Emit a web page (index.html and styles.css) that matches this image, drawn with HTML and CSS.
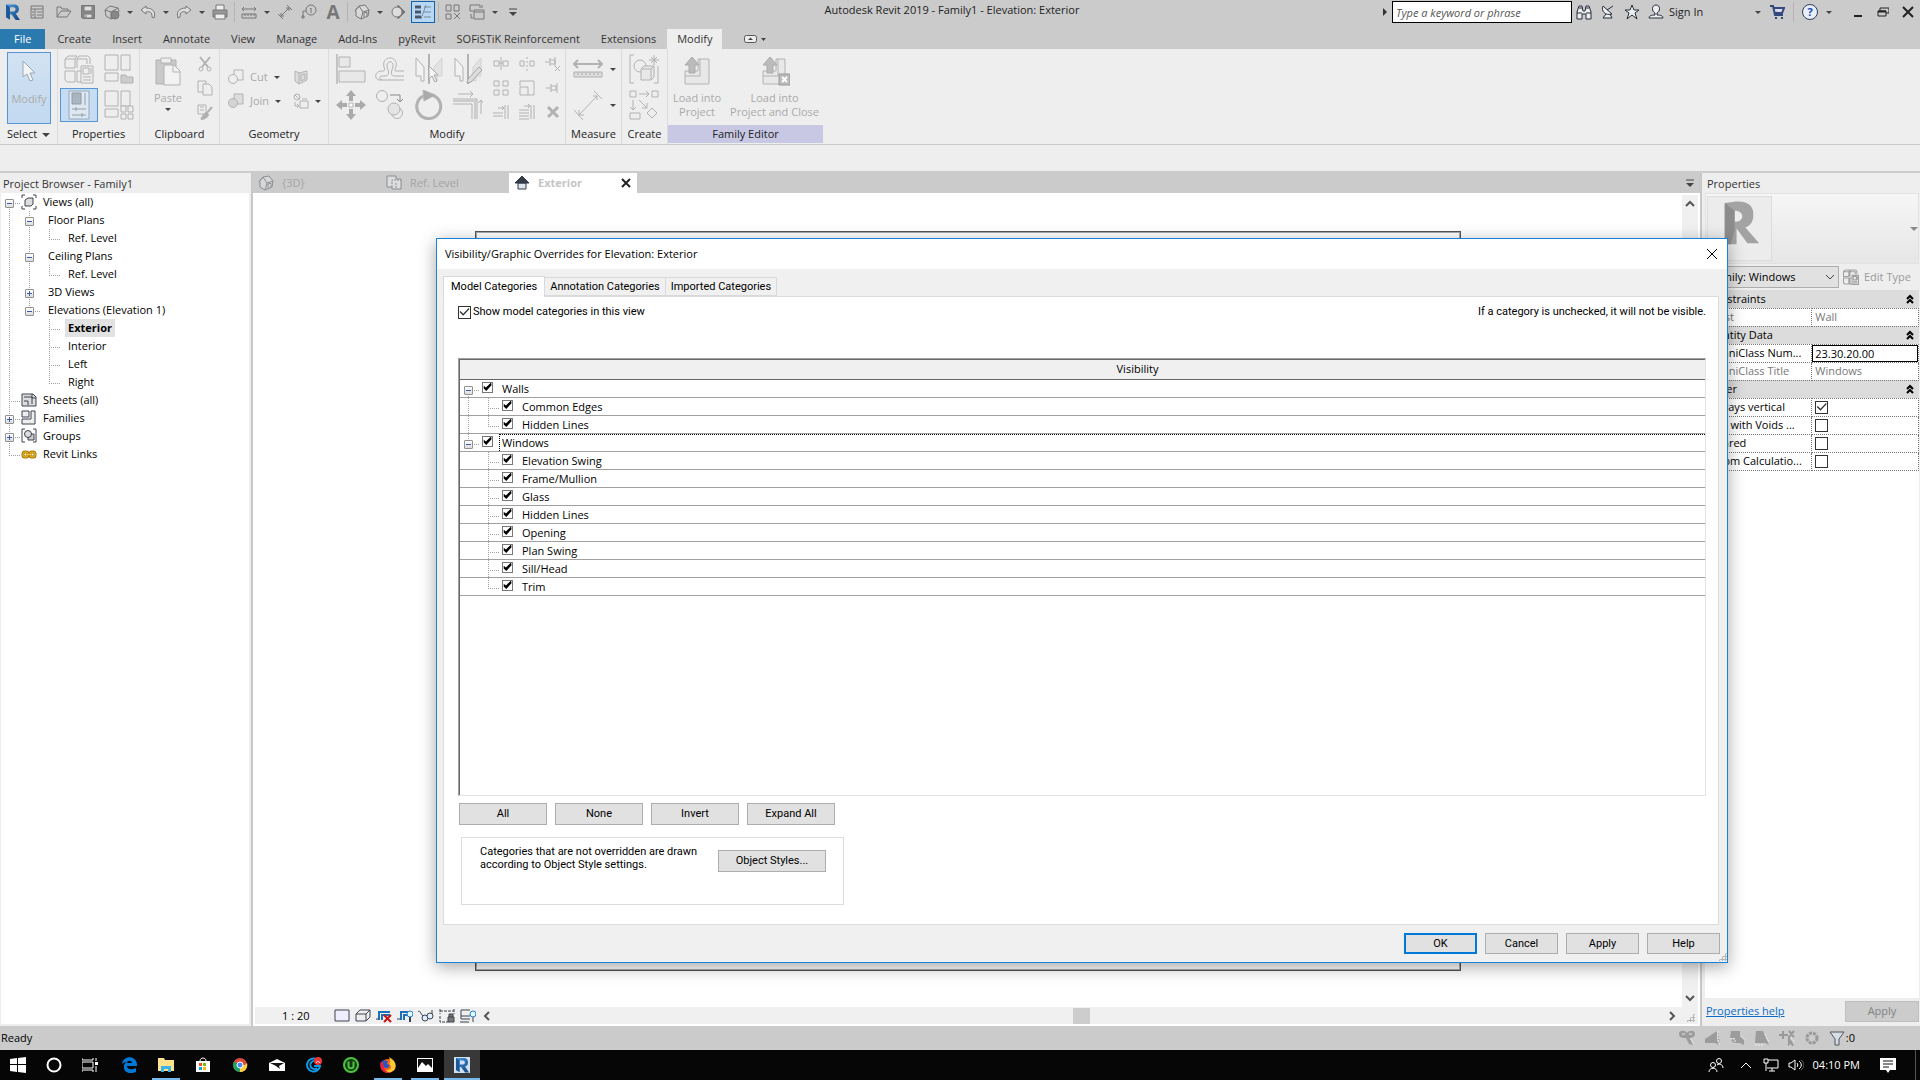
FILE: index.html
```html
<!doctype html>
<html lang="en">
  <head>
    <meta charset="UTF-8" />
    <meta name="viewport" content="width=device-width, initial-scale=1" />
    <title>Autodesk Revit 2019 - Family1 - Elevation: Exterior</title>
    <link rel="stylesheet" href="styles.css" />
  </head>
  <body>
    <!-- shared symbols -->
    <svg class="defs" aria-hidden="true">
      <linearGradient id="blue" x1="0" y1="0" x2="1" y2="1">
        <stop offset="0" stop-color="#4a9be0" />
        <stop offset="1" stop-color="#12427c" />
      </linearGradient>
      <symbol id="revit" viewBox="0 0 16 16">
        <path fill="url(#blue)" fill-rule="evenodd" d="M2 1h7c4 0 5 2 5 4.500 0 2-1 3.500-3 4l4 6h-4L7 10H5.500v5L2 13zM5.500 3.500v4H9c2.500 0 2.500-4 0-4z" />
        <path fill="#1b5799" d="M2 1l3.500 2.500V15L2 13z" />
      </symbol>
      <symbol id="cube" viewBox="0 0 16 16">
        <path d="M1 6l5-4 8 2 1 3-2 6-6 2-5-3zM1 6l6 2v7M7 8l7-4" />
      </symbol>
      <symbol id="house" viewBox="0 0 16 16">
        <path d="M1 7l4-5 6-1 4 5-1 6-7 3-5-3V7z" fill="#d8d8d8" />
        <path d="M1 7l4-5 4 6-2 7M9 8l6-2M10 13V9l3-1v4" />
      </symbol>
      <symbol id="boxes" viewBox="0 0 30 30">
        <path d="M1 5l3-3h9l-2 3v9H1zM13 5l2-3h9l2 2v6M1 5h10M13 5h10v5M13 5v9M1 17h10v11H3l-2-2zM13 17h4M13 17v11h4" />
        <path d="M17 12h12v17H17z" fill="#eee" /><path d="M19 14h6v6h-6zM27 14v6M19 23h8M19 26h8" />
      </symbol>
      <symbol id="blocks" viewBox="0 0 30 30">
        <path d="M1 1h13v15H1zM17 1h9v16M17 1v15h9M1 19h13v8H1z" />
      </symbol>
      <symbol id="chev-down" viewBox="0 0 10 10"><path d="M1 3l4 4 4-4" /></symbol>
      <symbol id="double-up" viewBox="0 0 8 10"><path d="M1 5l3-3 3 3M1 9l3-3 3 3" /></symbol>
    </svg>

    <header class="titlebar">
      <div class="qat">
        <svg class="logo"><use href="#revit" /></svg>
        <button aria-label="Home"><svg class="ic dark" viewBox="0 0 16 16"><path d="M2 2h12v12H2zM2 5h12M6 5v9M8 8h5M8 11h5M3 8h2M3 11h2" /></svg></button>
        <button class="gap" aria-label="Open"><svg class="ic dark" viewBox="0 0 16 16"><path d="M1 13V3h4l1 2h6v2M1 13l4-6h10l-4 6z" /></svg></button>
        <button aria-label="Save"><svg class="ic dark" viewBox="0 0 16 16"><path d="M1.500 1.500h13v13h-12l-1-1z" fill="#888" /><path d="M4 2h8v5H4zM4 10h8v4H4z" fill="#ddd" /><path d="M6 11v3" /></svg></button>
        <button aria-label="Synchronize"><svg class="ic dark"><use href="#cube" /><circle cx="11" cy="11" r="4" fill="#888" /></svg></button>
        <i class="caret"></i>
        <button aria-label="Undo"><svg class="ic dark" viewBox="0 0 16 16"><path d="M6 2L1 6l5 4V8c4-1 6 0 6 5l2 1c2-6-1-10-8-10z" fill="#ddd" /></svg></button>
        <i class="caret"></i>
        <button aria-label="Redo"><svg class="ic dark" viewBox="0 0 16 16"><path d="M10 2l5 4-5 4V8c-4-1-6 0-6 5l-2 1C0 8 3 4 10 4z" fill="#ddd" /></svg></button>
        <i class="caret"></i>
        <button aria-label="Print"><svg class="ic dark" viewBox="0 0 16 16"><path d="M4 6V1h8v5" fill="#eee" /><path d="M1 6h14v7H1z" fill="#999" /><path d="M3 10h10v5H3z" fill="#eee" /></svg></button>
        <i class="sep"></i>
        <button aria-label="Measure"><svg class="ic dark" viewBox="0 0 16 16"><path d="M1 5h14M3 3L1 5l2 2M13 3l2 2-2 2M1 10h14v4H1zM4 10v2M7 10v2M10 10v2M13 10v2" /></svg></button>
        <i class="caret"></i>
        <button aria-label="Aligned dimension"><svg class="ic dark" viewBox="0 0 16 16"><path d="M4 12l8-8M4 9v3h3M9 4h3v3M1 10l5 5M10 1l5 5" /></svg></button>
        <button aria-label="Tag by category"><svg class="ic dark" viewBox="0 0 16 16"><circle cx="10" cy="6" r="5" /><path d="M9 5l1-1v5M5 7H2v6M1 12h2v2H1z" /></svg></button>
        <button class="letter" aria-label="Text">A</button>
        <i class="sep"></i>
        <button aria-label="3D view"><svg class="ic dark"><use href="#house" /></svg></button>
        <i class="caret"></i>
        <button aria-label="Section"><svg class="ic dark" viewBox="0 0 16 16"><path d="M8 1l7 7-7 7z" fill="#777" /><circle cx="7" cy="8" r="5" fill="#ddd" /></svg></button>
        <button class="pressed" aria-label="Thin lines"><svg class="ic" viewBox="0 0 16 16"><path d="M0 3h6M0 8h6M0 13h6" stroke="#44596e" stroke-width="3" /><path d="M9 3h7M9 8h7M9 13h7M11 1L6 15" stroke="#6f8ba6" /></svg></button>
        <i class="sep"></i>
        <button aria-label="Close hidden windows"><svg class="ic dark" viewBox="0 0 16 16"><path d="M1 1h5v6H1zM9 1h5v6H9zM1 10h5v5H1zM9 9l6 6M15 9l-6 6" /></svg></button>
        <button aria-label="Switch windows"><svg class="ic dark" viewBox="0 0 16 16"><path d="M1 1h10v3M1 1v6h3M5 6h10v9H5zM5 8h10M13 1v3M2 10v4h2" /></svg></button>
        <i class="caret"></i>
        <button aria-label="Customize toolbar"><svg class="ic" viewBox="0 0 16 16"><path d="M4 5h8" stroke="#444" /><path d="M4 8h8l-4 4z" fill="#444" /></svg></button>
      </div>
      <h1>Autodesk Revit 2019 - Family1 - Elevation: Exterior</h1>
      <div class="infocenter">
        <i class="caret side"></i>
        <input type="text" class="search" placeholder="Type a keyword or phrase" aria-label="Search" />
        <button aria-label="Find"><svg class="ic black" viewBox="0 0 16 16"><path d="M1 15V8l2-6h3l1 5h2l1-5h3l2 6v7h-5v-5H6v5zM1 9h5M10 9h5M3 4h3M10 4h3" fill="#eee" /></svg></button>
        <button aria-label="Communication center"><svg class="ic black" viewBox="0 0 16 16"><path d="M3 2c-2 5 2 10 9 8zM7 6l6-4M6 10l-3 4h9l-2-4" fill="#eee" /></svg></button>
        <button aria-label="Favorites"><svg class="ic black" viewBox="0 0 16 16"><path d="M8 1l2 5h5l-4 3 2 6-5-4-5 4 2-6-4-3h5z" fill="#eee" /></svg></button>
        <button class="signin"><svg class="ic black" viewBox="0 0 16 16"><path d="M8 1c5 0 4 7 1 8v2c4 0 6 1 6 3H1c0-2 2-3 6-3V9C4 8 3 1 8 1z" fill="#eee" /></svg>Sign In</button>
        <i class="caret"></i>
        <button aria-label="App store"><svg class="ic" viewBox="0 0 16 16"><path d="M1 2h3l2 9h8M4 4h11l-2 5H6" fill="#dde" stroke="#334780" stroke-width="2" /><path d="M6 13h2v2H6zM12 13h2v2h-2z" fill="#334780" /></svg></button>
        <i class="sep"></i>
        <button class="help" aria-label="Help">?</button>
        <i class="caret"></i>
        <div class="winbtns">
          <button aria-label="Minimize"><svg viewBox="0 0 12 12"><path d="M2 10h8" stroke-width="2" /></svg></button>
          <button aria-label="Restore"><svg viewBox="0 0 12 12"><path d="M1 5h8v5H1zM3 5V2h9v5H9" /><path d="M1 5.500h8" stroke-width="2" /></svg></button>
          <button aria-label="Close"><svg viewBox="0 0 12 12"><path d="M1 1l10 10M11 1L1 11" stroke-width="2" /></svg></button>
        </div>
      </div>
    </header>

    <nav class="menu">
      <a class="file" href="#">File</a>
      <a href="#">Create</a>
      <a href="#">Insert</a>
      <a href="#">Annotate</a>
      <a href="#">View</a>
      <a href="#">Manage</a>
      <a href="#">Add-Ins</a>
      <a href="#">pyRevit</a>
      <a href="#">SOFiSTiK Reinforcement</a>
      <a href="#">Extensions</a>
      <a class="current" href="#">Modify</a>
      <button class="collapse" aria-label="Minimize ribbon"><svg viewBox="0 0 24 10"><rect x="1.500" y="1.500" width="12" height="7" rx="2" fill="#eee" stroke="#555" /><path d="M5 6h5L7.500 3.500zM18 4h5l-2.500 3z" fill="#444" /></svg></button>
    </nav>

    <div class="ribbon">
      <section class="panel select">
        <div class="tools">
          <button class="modify-btn" disabled>
            <svg viewBox="0 0 14 22"><path d="M1 1v16l4-3 3 7 3-1-3-7h5z" fill="#f4f4f4" stroke="#9aa7b5" /></svg>
            Modify
          </button>
        </div>
        <h2>Select <i class="caret big"></i></h2>
      </section>
      <section class="panel properties">
        <div class="tools icons">
          <button aria-label="Family category"><svg><use href="#boxes" /></svg></button>
          <button aria-label="Family types"><svg><use href="#blocks" /><path d="M17 21h5l1 2h6v6H17z" fill="#ccc" /></svg></button>
          <button class="active" aria-label="Properties"><svg viewBox="0 0 30 30"><path d="M5 1h20v28H5z" fill="#dfe8f0" stroke="#93a8bd" /><path d="M8 3h9v11H8z" fill="#a9b6c2" stroke="#8c9aa8" /><path d="M21 3v12M8 19h14M8 25h14M12 17v4M18 23v4" stroke="#8c9eb1" /></svg></button>
          <button aria-label="Type properties"><svg><use href="#blocks" /><path d="M17 16h5v6h-5zM24 16h5v6h-5zM17 24h5v5h-5zM24 24h5v5h-5z" fill="#eee" /></svg></button>
        </div>
        <h2>Properties</h2>
      </section>
      <section class="panel clipboard">
        <div class="tools">
          <button class="labelled">
            <svg viewBox="0 0 30 30"><path d="M3 4h20v24H3z" fill="#c9c9c9" /><path d="M8 2h10v5H8z" fill="#eee" /><path d="M11 9h10l6 6v14H11z" fill="#f2f2f2" /><path d="M20 9v7h7" /></svg>
            Paste<i class="caret"></i>
          </button>
          <div class="stack">
            <button aria-label="Cut"><svg class="ic" viewBox="0 0 16 16"><path d="M3 1l8 10M13 1L5 11" stroke-width="2" /><circle cx="4" cy="13" r="2" /><circle cx="12" cy="13" r="2" /></svg></button>
            <button aria-label="Copy"><svg class="ic" viewBox="0 0 16 16"><path d="M1 1h8v11H1z" /><path d="M6 4h6l3 3v8H6z" fill="#eee" /></svg></button>
            <button aria-label="Match type"><svg class="ic" viewBox="0 0 16 16"><path d="M1 1h8v9H1zM3 3h4M3 6h4" /><path d="M15 3L9 10M9 9l2 2c-2 3-4 4-7 4 2-1 2-4 5-6z" fill="#aaa" stroke-width="2" /></svg></button>
          </div>
        </div>
        <h2>Clipboard</h2>
      </section>
      <section class="panel geometry">
        <div class="tools">
          <button><svg class="ic" viewBox="0 0 16 16"><path d="M6 1h9v10H6z" /><circle cx="5" cy="10" r="4.500" fill="#eee" /></svg>Cut<i class="caret"></i></button>
          <button aria-label="Cope"><svg class="ic" viewBox="0 0 16 16"><path d="M2 2l4 2 8-2v9l-8 4-4-3zM6 4v11M8 6l4-1v5l-4 2z" fill="#ddd" /></svg></button>
          <button><svg class="ic" viewBox="0 0 16 16"><path d="M6 1h9v10H6z" fill="#ddd" /><circle cx="5" cy="10" r="4.500" fill="#d4d4d4" /></svg>Join<i class="caret"></i></button>
          <button aria-label="Split face"><svg class="ic" viewBox="0 0 16 16"><circle cx="4" cy="4" r="3" /><path d="M2 2l4 4M7 8h8v7H7zM9 6h5M2 9v4h3M4 11l2 2-2 2" /></svg><i class="caret"></i></button>
        </div>
        <h2>Geometry</h2>
      </section>
      <section class="panel modify">
        <div class="tools">
          <div class="icons">
            <button aria-label="Align"><svg viewBox="0 0 30 30"><path d="M1 0v30" stroke="#999" /><path d="M3 3h11v10H3zM3 17h26v11H3z" fill="#e8e8e8" /></svg></button>
            <button aria-label="Offset"><svg viewBox="0 0 30 30"><path d="M29 17h-8c-2 0-1-2 0-4 3-12-15-12-12 0 1 3 1 4-2 4-8 0-8 9-2 9h24M29 22h-9c-5 0-4-4-2-9 1-7-7-7-6 0 2 5 3 9-3 9H7c-3 0-3 4 0 4" /></svg></button>
            <button aria-label="Mirror pick axis"><svg viewBox="0 0 30 30"><path d="M2 4l8 9v14H7v-5H2z" fill="#f2f2f2" /><path d="M28 4l-8 9v14h3v-5h5z" fill="#e2e2e2" stroke="#d2d2d2" /><path d="M15 0v30" stroke-width="2" /><path d="M15 12v13l3-3 3 6 2-1-3-6h4z" fill="#f5f5f5" stroke="#a6a6a6" /></svg></button>
            <button aria-label="Mirror draw axis"><svg viewBox="0 0 30 30"><path d="M2 4l8 9v14H7v-5H2z" fill="#f2f2f2" /><path d="M28 4l-8 9v14h3v-5h5z" fill="#e2e2e2" stroke="#d2d2d2" /><path d="M15 0v30" stroke-width="2" /><path d="M26 13l3 3-11 12-4 1 1-4z" fill="#ddd" stroke="#a6a6a6" /></svg></button>
            <button aria-label="Move"><svg viewBox="0 0 30 30"><path d="M15 0l5 6h-3v5h-4V6h-3zM15 30l5-6h-3v-5h-4v5h-3zM0 15l6-5v3h5v4H6v3zM30 15l-6-5v3h-5v4h5v3z" fill="#aaa" stroke="none" /><path d="M13 13h4v4h-4z" fill="#fff" /></svg></button>
            <button aria-label="Copy"><svg viewBox="0 0 30 30"><circle cx="7" cy="6" r="5.500" /><path d="M15 5h10v7M22 9l3 3 3-3" stroke="#888" /><circle cx="22" cy="23" r="5.500" /><circle cx="19" cy="19" r="6" fill="#e4e4e4" /></svg></button>
            <button aria-label="Rotate"><svg viewBox="0 0 30 30"><path d="M18 5a12 12 0 1 1-9 1" stroke-width="3" /><path d="M9 0l12 5-11 6z" fill="#aaa" /></svg></button>
            <button aria-label="Trim corner"><svg viewBox="0 0 30 30"><path d="M0 9h24v20M0 14h19v15" /><path d="M0 11h22v18" stroke="#ccc" stroke-width="2" /><path d="M5 4h15M17 1l3 3-3 3M28 24V10M25 13l3-3 2 3" /></svg></button>
          </div>
          <div class="small">
            <button aria-label="Split"><svg class="ic" viewBox="0 0 16 16"><path d="M1 5h5v5H1zM10 5h5v5h-5zM6 7h4M8 1v13" /></svg></button>
            <button aria-label="Split with gap"><svg class="ic" viewBox="0 0 16 16"><path d="M1 5h4v5H1zM11 5h4v5h-4zM8 1v2M8 5v2M8 9v2M8 13v2" /></svg></button>
            <button aria-label="Unpin"><svg class="ic" viewBox="0 0 16 16"><path d="M0 6h5M5 2v8M5 4h5v4H5M10 1v9M10 10l5 5M15 10l-5 5" /></svg></button>
            <button aria-label="Array"><svg class="ic" viewBox="0 0 16 16"><path d="M1 1h5v5H1zM10 1h5v5h-5zM1 10h5v5H1zM10 10h5v5h-5z" /></svg></button>
            <button aria-label="Scale"><svg class="ic" viewBox="0 0 16 16"><path d="M1 1h14v14H9M1 1v5M1 7h8v8H1z" /></svg></button>
            <button aria-label="Pin"><svg class="ic" viewBox="0 0 16 16"><path d="M1 8h5M6 4v8M6 6h5v4H6M12 3v10" /></svg></button>
            <button aria-label="Trim single"><svg class="ic" viewBox="0 0 16 16"><path d="M5 4h6M9 2l2 2-2 2M0 9h10M0 12h10M12 1v14M15 1v14" /></svg></button>
            <button aria-label="Trim multiple"><svg class="ic" viewBox="0 0 16 16"><path d="M5 2h6M9 0l2 2-2 2M0 6h10M0 9h10M0 12h10M0 15h10M12 1v14M15 1v14" /></svg></button>
            <button aria-label="Delete"><svg class="ic" viewBox="0 0 16 16"><path d="M3 3l10 10M13 3L3 13" stroke-width="3" /></svg></button>
          </div>
        </div>
        <h2>Modify</h2>
      </section>
      <section class="panel measure">
        <div class="tools">
          <button aria-label="Measure"><svg viewBox="0 0 30 30"><path d="M2 10h26M5 6l-4 4 4 4M25 6l4 4-4 4" stroke-width="2" /><path d="M1 18h28v5H1zM5 18v3M9 18v3M13 18v3M17 18v3M21 18v3M25 18v3" fill="#ddd" /></svg><i class="caret"></i></button>
          <button aria-label="Dimension"><svg viewBox="0 0 30 30"><path d="M6 25L24 6M20 6h4v4M6 20v5h5M1 20l9 10M21 1l8 8" /></svg><i class="caret"></i></button>
        </div>
        <h2>Measure</h2>
      </section>
      <section class="panel create">
        <div class="tools icons">
          <button aria-label="Create group"><svg viewBox="0 0 30 30"><path d="M5 1H1v28h4M25 29h4V12M25 1v10M20 6h10M22 3l6 6M28 3l-6 6" /><circle cx="11" cy="12" r="6" /><path d="M12 15l3-3h10v11l-3 3H12zM12 15h10v11M22 15l3-3" fill="#e8e8e8" /></svg></button>
          <button aria-label="Create similar"><svg viewBox="0 0 30 30"><path d="M1 1h6v6H1zM23 1h6v6h-6zM1 23h10v6H1zM23 18l5 5-5 5-5-5zM10 4h10M17 1l3 3-3 3M4 10v10M1 17l3 3 3-3M10 10l8 8M13 18h5v-5" /></svg></button>
        </div>
        <h2>Create</h2>
      </section>
      <section class="panel family">
        <div class="tools">
          <button class="labelled"><svg viewBox="0 0 30 30"><path d="M3 15h13V3h11v25H3z" fill="#e8e8e8" /><path d="M3 20h15V3" /><path d="M10 1l7 8h-4v8H7V9H3z" fill="#bbb" stroke="#aaa" /></svg>Load into<br />Project</button>
          <button class="labelled"><svg viewBox="0 0 30 30"><path d="M3 15h13V3h9v25H3z" fill="#e8e8e8" /><path d="M3 20h15V3" /><path d="M10 1l7 8h-4v8H7V9H3z" fill="#bbb" stroke="#aaa" /><path d="M19 18h11v11H19z" fill="#bbb" stroke="#999" /><path d="M22 21l5 5M27 21l-5 5" stroke="#fff" stroke-width="2" /></svg>Load into<br />Project and Close</button>
        </div>
        <h2>Family Editor</h2>
      </section>
    </div>
    <div class="optionsbar"></div>

    <main class="workspace">
      <aside class="browser">
        <h2>Project Browser - Family1</h2>
        <ul class="tree">
          <li><span class="g down"><button class="tog" aria-label="Collapse"></button></span><svg class="ic tree-ic" viewBox="0 0 16 16"><path d="M4 1H1v3M12 1h3v3M4 15H1v-3M12 15h3v-3" /><path d="M4 6l3-2h5v6l-2 2H4z" fill="#ddd" /></svg>Views (all)</li>
          <li><span class="g v"></span><span class="g v"><button class="tog" aria-label="Collapse"></button></span><b></b>Floor Plans</li>
          <li><span class="g v"></span><span class="g v"></span><span class="g l"></span><b></b>Ref. Level</li>
          <li><span class="g v"></span><span class="g v"><button class="tog" aria-label="Collapse"></button></span><b></b>Ceiling Plans</li>
          <li><span class="g v"></span><span class="g v"></span><span class="g l"></span><b></b>Ref. Level</li>
          <li><span class="g v"></span><span class="g v"><button class="tog plus" aria-label="Expand"></button></span><b></b>3D Views</li>
          <li><span class="g v"></span><span class="g l"><button class="tog" aria-label="Collapse"></button></span><b></b>Elevations (Elevation 1)</li>
          <li><span class="g v"></span><span class="g"></span><span class="g t"></span><b></b><strong>Exterior</strong></li>
          <li><span class="g v"></span><span class="g"></span><span class="g t"></span><b></b>Interior</li>
          <li><span class="g v"></span><span class="g"></span><span class="g t"></span><b></b>Left</li>
          <li><span class="g v"></span><span class="g"></span><span class="g l"></span><b></b>Right</li>
          <li><span class="g t"></span><svg class="ic tree-ic" viewBox="0 0 16 16"><path d="M1 2h11l3 3v9H1z" fill="#ddd" /><path d="M3 5h8v7M3 9h4v4M11 2v4h4" /></svg>Sheets (all)</li>
          <li><span class="g t"><button class="tog plus" aria-label="Expand"></button></span><svg class="ic tree-ic" viewBox="0 0 16 16"><path d="M1 1h7v6H1zM10 1h4v13H1V9h9z" fill="#eee" /></svg>Families</li>
          <li><span class="g t"><button class="tog plus" aria-label="Expand"></button></span><svg class="ic tree-ic" viewBox="0 0 16 16"><path d="M4 1H1v13h3M12 1h3v13h-3" /><path d="M7 6h6v6H7z" fill="#ccc" /><circle cx="7" cy="6" r="3.500" fill="#ddd" /></svg>Groups</li>
          <li><span class="g l"></span><svg class="ic tree-ic" viewBox="0 0 16 16"><g stroke="#a87800" stroke-width="3"><rect x="2" y="6" width="5" height="5" rx="2" /><rect x="9" y="6" width="5" height="5" rx="2" /></g><g stroke="#f4c430"><rect x="2" y="6" width="5" height="5" rx="2" /><rect x="9" y="6" width="5" height="5" rx="2" /><path d="M5 8.500h6" /></g></svg>Revit Links</li>
        </ul>
      </aside>

      <section class="views">
        <div class="doctabs">
          <button><svg class="ic"><use href="#house" /></svg>{3D}</button>
          <button><svg class="ic" viewBox="0 0 16 16"><path d="M1 1h9v3h5v10H6v-2H1z" fill="#ddd" /><path d="M6 12V5h9M10 8v6" stroke-dasharray="2 1" /></svg>Ref. Level</button>
          <button class="current"><svg class="ic" viewBox="0 0 16 16"><path d="M4 8h8v6H4z" fill="#dde5ee" stroke="#333c48" /><path d="M8 1l7 7H1z" fill="#333c48" stroke="#333c48" /></svg>Exterior<svg class="x" viewBox="0 0 12 12"><path d="M2 2l8 8M10 2l-8 8" /></svg></button>
          <button class="more" aria-label="Tab list"><svg class="ic" viewBox="0 0 16 16"><path d="M4 5h8" stroke="#444" /><path d="M4 8h8l-4 4z" fill="#444" stroke="none" /></svg></button>
        </div>
        <div class="canvas">
          <div class="sheet"></div>
          <div class="vscroll">
            <svg viewBox="0 0 10 10"><path d="M1 7l4-4 4 4" /></svg>
            <svg viewBox="0 0 10 10"><use href="#chev-down" /></svg>
          </div>
        </div>
        <div class="viewbar">
          <span class="scale">1 : 20</span>
          <svg class="ic" viewBox="0 0 16 16"><path d="M1 2h14v11H1z" fill="#eef" /></svg>
          <svg class="ic" viewBox="0 0 16 16"><path d="M1 6l4-4h10v7l-4 4H1zM1 6h10v7M11 6l4-4" fill="#eee" /></svg>
          <svg class="ic" viewBox="0 0 16 16"><path d="M3 12V4h11M6 12V7h8" stroke="#1d6fb8" stroke-width="2" /><path d="M0 11h3" /><path d="M8 7l7 7M15 7l-7 7" stroke="#c11" stroke-width="2" /></svg>
          <svg class="ic" viewBox="0 0 16 16"><path d="M4 12V4h8M7 12V7h4" stroke="#1d6fb8" stroke-width="2" /><path d="M0 11h3" /><circle cx="13" cy="6" r="3" fill="#dff" stroke="#2b7cc4" /><path d="M13 9v5" stroke="#345" stroke-width="2" /></svg>
          <svg class="ic" viewBox="0 0 16 16"><path d="M0 4c2-3 3 3 5 4M14 2v4" /><circle cx="7" cy="10" r="3" fill="#def" /><circle cx="12" cy="8" r="3" fill="#def" /></svg>
          <svg class="ic" viewBox="0 0 16 16"><path d="M1 1v5M15 1v5M1 3h14M1 8v6h8" stroke-dasharray="3 1" /><path d="M9 9h6v5H9zM10 9V6h4v3" fill="#777" /></svg>
          <svg class="ic" viewBox="0 0 16 16"><path d="M1 2h9M1 2v9h9M1 8h9M0 14h9" /><circle cx="13" cy="6" r="3" fill="#dff" stroke="#2b7cc4" /><path d="M13 9v5" /></svg>
          <svg class="arrow" viewBox="0 0 10 10"><path d="M7 1L3 5l4 4" /></svg>
          <div class="track"><i class="thumb"></i></div>
          <svg class="arrow" viewBox="0 0 10 10"><path d="M3 1l4 4-4 4" /></svg>
          <i class="grip"></i>
        </div>
      </section>

      <aside class="props">
        <h2>Properties</h2>
        <div class="typebox">
          <div class="thumb-r"><svg viewBox="0 0 64 64"><path fill="#a3a3a3" fill-rule="evenodd" d="M17 6l8-1c15-2 22 4 21 14 0 6-3 10-8 12l14 16H40L29 32v16H17zM27 14v11c10 1 11-11 0-11z" /><path fill="#8c8c8c" d="M17 6l10 8v20l-4 14h-6z" /></svg></div>
          <i class="caret big"></i>
        </div>
        <div class="family-row">
          <select aria-label="Family"><option>Family: Windows</option></select>
          <svg class="chev" viewBox="0 0 10 10"><use href="#chev-down" /></svg>
          <button disabled><svg class="ic"><use href="#boxes" /></svg>Edit Type</button>
        </div>
        <div class="param-list">
          <table class="params">
            <tr class="cat"><th colspan="2"><div>Constraints<svg viewBox="0 0 8 10"><use href="#double-up" /></svg></div></th></tr>
            <tr class="off"><td>Host</td><td>Wall</td></tr>
            <tr class="cat"><th colspan="2"><div>Identity Data<svg viewBox="0 0 8 10"><use href="#double-up" /></svg></div></th></tr>
            <tr><td>OmniClass Num...</td><td class="edit"><input type="text" value="23.30.20.00" aria-label="OmniClass Number" /></td></tr>
            <tr class="off"><td>OmniClass Title</td><td>Windows</td></tr>
            <tr class="cat"><th colspan="2"><div>Other<svg viewBox="0 0 8 10"><use href="#double-up" /></svg></div></th></tr>
            <tr><td><label for="p1">Always vertical</label></td><td><input type="checkbox" id="p1" class="thin" checked /></td></tr>
            <tr><td><label for="p2">Cut with Voids ...</label></td><td><input type="checkbox" id="p2" class="thin" /></td></tr>
            <tr><td><label for="p3">Shared</label></td><td><input type="checkbox" id="p3" class="thin" /></td></tr>
            <tr><td><label for="p4">Room Calculatio...</label></td><td><input type="checkbox" id="p4" class="thin" /></td></tr>
          </table>
        </div>
        <div class="props-foot">
          <a href="#">Properties help</a>
          <button disabled>Apply</button>
        </div>
      </aside>
    </main>

    <footer class="status">
      <span>Ready</span>
      <div class="status-icons">
        <svg viewBox="0 0 16 16"><path d="M0 4c0-4 6-4 8-1 2-3 8-3 8 1 0 3-3 4-5 4l3 7-4-1-3-6C4 8 0 8 0 4z" /><path d="M3 4h3M10 4h3M11 8l4 6" stroke="#e4e4e4" /></svg>
        <svg viewBox="0 0 16 16"><path d="M13 1v9l2 5-4-2H1V9z" /><path d="M14 1v9l2 5" stroke="#f0f0f0" stroke-dasharray="2 1" /></svg>
        <svg viewBox="0 0 16 16"><path d="M2 1h9v5l4 4v5l-4-2H6V8H1z" /><path d="M1 9h5v5M12 6l4 4" stroke="#f0f0f0" stroke-dasharray="2 1" /></svg>
        <svg viewBox="0 0 16 16"><path d="M2 1h7l3 7 3 7-4-2H1z" /><path d="M1 15h9M11 4l4 8" stroke="#f0f0f0" stroke-dasharray="2 1" /></svg>
        <svg viewBox="0 0 16 16"><path d="M4 1v8M0 5h9M10 1l5 6M15 1l-5 6M10 6v8l2-2 2 4" stroke="#999" stroke-width="2" /><path d="M12 8l4 4" stroke="#f0f0f0" stroke-dasharray="2 1" /></svg>
        <svg viewBox="0 0 16 16"><circle cx="8" cy="8" r="5" fill="none" stroke="#999" stroke-width="3" stroke-dasharray="3 1" /></svg>
        <svg viewBox="0 0 16 16"><path d="M1 2h14L10 9v6H6V9z" fill="#d5dde6" stroke="#555" /></svg>
        <span>:0</span>
      </div>
    </footer>

    <nav class="taskbar">
      <button aria-label="Start"><svg viewBox="0 0 16 16"><path d="M0 2l7-1v6H0zM8 1l8-1v7H8zM0 8h7v7l-7-1zM8 8h8v8l-8-1z" fill="#fff" /></svg></button>
      <button aria-label="Cortana"><svg viewBox="0 0 16 16"><circle cx="8" cy="8" r="6.500" stroke="#fff" stroke-width="2" /></svg></button>
      <button aria-label="Task view"><svg viewBox="0 0 16 16"><path d="M0 1v2h11V1M0 15v-2h11v2M0 5h11v6H0zM14 1v3M14 9v6" stroke="#fff" /><path d="M13 5h3v3h-3z" fill="#fff" /></svg></button>
      <div class="apps">
        <button aria-label="Edge"><svg viewBox="0 0 16 16"><path fill="#0078d7" d="M1 7c1-9 14-9 15 0v2H6c0 4 5 4 9 2v4c-7 3-13 0-12-6 0-2 1-3 3-4-2 0-4 1-5 2zm5-1h5c0-3-5-3-5 0z" /></svg></button>
        <button class="open" aria-label="File Explorer"><svg viewBox="0 0 16 16"><path d="M0 1h6l1 2h9v11H0z" fill="#ffe28a" /><path d="M3 15V9h10v6h-3v-3H6v3z" fill="#3bb4ea" /></svg></button>
        <button aria-label="Store"><svg viewBox="0 0 16 16"><path d="M5 4c0-4 6-4 6 0" stroke="#fff" /><path d="M1 4h14v11H1z" fill="#fff" /><path d="M4 6h3v3H4z" fill="#f25022" /><path d="M8 6h3v3H8z" fill="#7fba00" /><path d="M4 10h3v3H4z" fill="#00a4ef" /><path d="M8 10h3v3H8z" fill="#ffb900" /></svg></button>
        <button aria-label="Chrome"><svg viewBox="0 0 16 16"><circle cx="8" cy="8" r="7" fill="#dd4b3e" /><path d="M8 8L2 4.500A7 7 0 0 0 8 15z" fill="#1da462" /><path d="M8 8h7a7 7 0 0 1-7 7z" fill="#ffcd46" /><path d="M8 15l3-5 4-4a7 7 0 0 1-7 9z" fill="#ffcd46" /><circle cx="8" cy="8" r="3" fill="#4c8bf5" stroke="#fff" /></svg></button>
        <button aria-label="Mail"><svg viewBox="0 0 16 16"><path d="M0 6l8-4 8 4v8H0z" fill="#fff" /><path d="M1 6h14l-5 3 1 3-4-3z" fill="#111" /></svg></button>
        <button aria-label="Gramblr"><svg viewBox="0 0 16 16"><path d="M10 2a6.500 6.500 0 1 0 4 7H8M11 5a4 4 0 1 0 0 6" stroke="#0c9be8" stroke-width="2" /><circle cx="12" cy="4" r="4" fill="#e33" /><path d="M10 6c1-2 3-2 4 0" stroke="#fff" /></svg></button>
        <button aria-label="uTorrent"><svg viewBox="0 0 16 16"><circle cx="8" cy="8" r="7" fill="#163a18" stroke="#4bc43c" stroke-width="2" /><path d="M5.500 4.500V9c0 3 5 3 5 0V4.500" stroke="#4bc43c" stroke-width="2" /></svg></button>
        <button class="open" aria-label="Firefox"><svg viewBox="0 0 16 16"><circle cx="8" cy="9" r="7" fill="#ff6611" /><path d="M9 0c6 3 8 8 6 12-3 4-7 4-9 1 5 0 7-3 3-6 2-2 1-4 0-7z" fill="#ffcb2e" /><path d="M2 3c2 1 2 0 6 1l-1 3 3 1-2 3c-3 1-5-1-5-4z" fill="#2a54c8" /><path d="M1 4c-3 7 2 13 9 12C4 15 4 10 3 7z" fill="#e5203a" /></svg></button>
        <button class="open" aria-label="Photos"><svg viewBox="0 0 16 16"><path d="M0 1h16v14H0z" fill="#fff" /><path d="M1 2h14v9l-4-4-2 2-4-4-4 6z" fill="#111" /></svg></button>
        <button class="focused" aria-label="Revit"><svg viewBox="0 0 16 16"><path d="M0 0h16v16H0z" fill="#cfe0f0" /><use href="#revit" /></svg></button>
      </div>
      <div class="tray">
        <svg viewBox="0 0 16 16"><circle cx="11" cy="4" r="2.500" /><circle cx="5" cy="8" r="2.500" /><path d="M1 15c0-5 8-5 8 0M9 8c3-2 6 0 6 3" /></svg>
        <svg viewBox="0 0 16 16"><path d="M3 11l5-5 5 5" /></svg>
        <svg viewBox="0 0 16 16"><path d="M5 3h10v8H4M9 11v3M6 14h6M1 2h4v4H1zM3 6v8" /></svg>
        <svg viewBox="0 0 16 16"><path d="M1 6h2l4-3v10l-4-3H1zM9 6c1 1 1 3 0 4M11 4c3 2 3 6 0 8" /><path d="M13 3c4 3 4 7 0 10" stroke="#666" /></svg>
        <time>04:10 PM</time>
        <svg class="note" viewBox="0 0 16 16"><path d="M0 1h16v12h-6l-2 3-2-3H0z" fill="#fff" stroke="none" /><path d="M3 4h10M3 7h10M3 10h6" stroke="#111" /></svg>
        <i class="show-desktop"></i>
      </div>
    </nav>

    <div class="dialog" role="dialog" aria-labelledby="dlg-title">
      <div class="dlg-title">
        <h2 id="dlg-title">Visibility/Graphic Overrides for Elevation: Exterior</h2>
        <button aria-label="Close dialog"><svg viewBox="0 0 12 12"><path d="M1 1l10 10M11 1L1 11" /></svg></button>
      </div>
      <div class="dlg-tabs">
        <button class="current">Model Categories</button>
        <button>Annotation Categories</button>
        <button>Imported Categories</button>
      </div>
      <div class="dlg-page">
        <div class="dlg-top">
          <input type="checkbox" id="show" class="thin" checked /><label for="show">Show model categories in this view</label>
          <p>If a category is unchecked, it will not be visible.</p>
        </div>
        <div class="list">
          <table>
            <thead><tr><th>Visibility</th></tr></thead>
            <tbody>
              <tr><td><div><span class="g down"><button class="tog" aria-label="Collapse"></button></span><input type="checkbox" id="c1" checked /><label for="c1">Walls</label></div></td></tr>
              <tr><td><div><span class="g v"></span><span class="g t"></span><input type="checkbox" id="c2" checked /><label for="c2">Common Edges</label></div></td></tr>
              <tr><td><div><span class="g v"></span><span class="g l"></span><input type="checkbox" id="c3" checked /><label for="c3">Hidden Lines</label></div></td></tr>
              <tr><td><div><span class="g l"><button class="tog" aria-label="Collapse"></button></span><input type="checkbox" id="c4" checked /><label class="focus" for="c4">Windows</label></div></td></tr>
              <tr><td><div><span class="g"></span><span class="g t"></span><input type="checkbox" id="c5" checked /><label for="c5">Elevation Swing</label></div></td></tr>
              <tr><td><div><span class="g"></span><span class="g t"></span><input type="checkbox" id="c6" checked /><label for="c6">Frame/Mullion</label></div></td></tr>
              <tr><td><div><span class="g"></span><span class="g t"></span><input type="checkbox" id="c7" checked /><label for="c7">Glass</label></div></td></tr>
              <tr><td><div><span class="g"></span><span class="g t"></span><input type="checkbox" id="c8" checked /><label for="c8">Hidden Lines</label></div></td></tr>
              <tr><td><div><span class="g"></span><span class="g t"></span><input type="checkbox" id="c9" checked /><label for="c9">Opening</label></div></td></tr>
              <tr><td><div><span class="g"></span><span class="g t"></span><input type="checkbox" id="c10" checked /><label for="c10">Plan Swing</label></div></td></tr>
              <tr><td><div><span class="g"></span><span class="g t"></span><input type="checkbox" id="c11" checked /><label for="c11">Sill/Head</label></div></td></tr>
              <tr><td><div><span class="g"></span><span class="g l"></span><input type="checkbox" id="c12" checked /><label for="c12">Trim</label></div></td></tr>
            </tbody>
          </table>
        </div>
        <div class="btns">
          <button>All</button>
          <button>None</button>
          <button>Invert</button>
          <button>Expand All</button>
        </div>
        <div class="override">
          <p>Categories that are not overridden are drawn according to Object Style settings.</p>
          <button>Object Styles...</button>
        </div>
      </div>
      <div class="dlg-foot">
        <button class="default">OK</button>
        <button>Cancel</button>
        <button>Apply</button>
        <button>Help</button>
        <i class="grip"></i>
      </div>
    </div>
  </body>
</html>
```

FILE: styles.css
```css
* {
  box-sizing: border-box;
}
body {
  margin: 0;
  height: 100vh;
  display: flex;
  flex-direction: column;
  overflow: hidden;
  font-family: "Open Sans", "Noto Sans", sans-serif;
  font-size: 11px;
  line-height: 14px;
  color: #222;
  background: #eee;
}
h1,
h2,
p,
ul {
  margin: 0;
  padding: 0;
  font-size: 11px;
  font-weight: normal;
}
button,
input,
select {
  font: inherit;
  color: inherit;
  margin: 0;
}
button {
  padding: 0;
  border: none;
  background: none;
}
svg {
  display: block;
  flex: none;
  fill: none;
}
.defs {
  position: absolute;
  width: 0;
  height: 0;
}
.ic {
  width: 16px;
  height: 16px;
}
.dark {
  stroke: #777;
}
.black {
  stroke: #222a38;
}
.caret {
  flex: none;
  border: 3px solid transparent;
  border-top-color: #444;
  border-bottom: none;
}
.caret.big {
  display: inline-block;
  border-width: 4px;
  border-bottom: none;
  margin-left: 2px;
  vertical-align: middle;
}
.caret.side {
  border: 4px solid transparent;
  border-left-color: #333;
  border-right: none;
}

/* title bar */
.titlebar,
.qat,
.infocenter,
.winbtns {
  display: flex;
  align-items: center;
}
.titlebar {
  height: 24px;
  background: #cbcbcb;
}
.qat {
  gap: 8px;
  padding-left: 4px;
}
.logo {
  width: 17px;
  height: 20px;
}
.qat .caret {
  margin: 0 -1px;
}
.qat .gap {
  margin-left: 3px;
}
.sep {
  width: 1px;
  height: 20px;
  margin: 0 -2px;
  background: #b4b4b4;
}
.letter {
  width: 16px;
  font-size: 19px;
  font-weight: bold;
  line-height: 20px;
  color: #777;
}
.pressed {
  padding: 2px 3px;
  margin: 0 -3px;
  border: 1px solid #0a64b4;
  background: #b9d7f1;
}
.titlebar h1 {
  flex: 1;
  text-align: center;
  line-height: 16px;
  padding-bottom: 4px;
}
.infocenter {
  gap: 8px;
}
.search {
  width: 180px;
  height: 22px;
  margin-right: -4px;
  border: 1px solid #000;
  background: #fff;
  padding: 0 3px;
  font-style: italic;
}
.search::placeholder {
  color: #555;
}
.infocenter .caret.side {
  margin-right: -3px;
}
.infocenter .sep {
  margin: 0;
}
.signin {
  display: flex;
  align-items: center;
  gap: 5px;
  width: 99px;
}
.help {
  width: 16px;
  height: 16px;
  border: 1px solid #333c55;
  border-radius: 50%;
  background: #e8eefa;
  color: #1a48b0;
  font-weight: bold;
}
.winbtns {
  gap: 13px;
  padding: 0 6px 0 12px;
}
.winbtns svg {
  width: 12px;
  height: 12px;
  stroke: #222;
}

/* ribbon tabs */
.menu {
  display: flex;
  align-items: flex-end;
  gap: 1px;
  height: 25px;
  background: #cbcbcb;
}
.menu a {
  height: 20px;
  padding: 0 10px;
  line-height: 19px;
  color: #333;
  text-decoration: none;
}
.menu .file {
  padding: 0 14px;
  margin-right: 1px;
  background: #2a7ab0;
  color: #fff;
}
.menu .current {
  background: #eee;
}
.collapse {
  margin: 0 20px 5px;
}
.collapse svg {
  width: 24px;
  height: 10px;
}

/* ribbon */
.ribbon {
  display: flex;
  height: 96px;
  border-bottom: 1px solid #cbcbcb;
}
.panel {
  display: flex;
  flex-direction: column;
  border-right: 1px solid #dcdcdc;
  color: #aaa;
}
.panel h2 {
  height: 18px;
  line-height: 17px;
  margin-bottom: 1px;
  text-align: center;
  color: #222;
}
.panel .tools {
  flex: 1;
}
.panel svg {
  stroke: #b2b2b2;
}
.panel button {
  color: #aaa;
}
.icons {
  display: grid;
  grid-template-columns: 30px 30px;
  grid-auto-rows: 30px;
  gap: 6px 10px;
}
.icons svg,
.labelled svg,
.measure svg {
  width: 30px;
  height: 30px;
}
.select {
  width: 58px;
}
.select .tools {
  padding: 3px 5px 0 7px;
}
.modify-btn {
  display: flex;
  flex-direction: column;
  align-items: center;
  gap: 10px;
  width: 44px;
  height: 72px;
  padding-top: 7px;
  border: 1px solid #5796d2;
  background: linear-gradient(#d2e2f2, #c2d9f0);
}
.modify-btn svg {
  width: 14px;
  height: 22px;
}
.properties {
  width: 82px;
}
.properties .tools {
  padding: 5px 0 0 6px;
}
.active {
  margin: -2px -4px;
  padding: 1px 3px;
  border: 1px solid #5796d2;
  background: #c6dcf2;
}
.clipboard {
  width: 80px;
}
.clipboard .tools {
  display: flex;
  gap: 14px;
  padding: 7px 0 0 13px;
}
.labelled {
  display: flex;
  flex-direction: column;
  align-items: center;
  align-self: flex-start;
}
.labelled svg {
  margin-bottom: 5px;
}
.labelled .caret {
  margin-top: 3px;
}
.stack,
.small {
  display: grid;
  align-content: start;
  gap: 8px 10px;
}
.geometry {
  width: 109px;
}
.geometry .tools {
  display: grid;
  grid-template-columns: 65px 30px;
  align-content: start;
  gap: 8px 0;
  padding: 20px 0 0 8px;
}
.geometry button {
  display: flex;
  align-items: center;
  gap: 6px;
}
.modify {
  width: 237px;
}
.modify .tools {
  display: flex;
  gap: 10px;
  padding: 5px 0 0 7px;
}
.modify .icons {
  grid-template-columns: repeat(4, 30px);
  column-gap: 9px;
}
.small {
  grid-template-columns: repeat(3, 16px);
  padding-top: 2px;
}
.measure {
  width: 56px;
}
.measure .tools {
  display: grid;
  align-content: start;
  gap: 6px;
  padding: 5px 0 0 7px;
}
.measure button {
  display: flex;
  align-items: center;
  gap: 7px;
}
.create {
  width: 46px;
}
.create .tools {
  grid-template-columns: 30px;
  padding: 5px 0 0 7px;
}
.family {
  border: none;
}
.family .tools {
  display: flex;
  padding-top: 7px;
}
.family .labelled:first-child {
  width: 58px;
}
.family .labelled:last-child {
  width: 97px;
}
.family h2 {
  background: #c8c8e4;
}
.optionsbar {
  height: 28px;
  border-bottom: 2px solid #cbcbcb;
}

/* workspace */
.workspace {
  flex: 1;
  min-height: 0;
  display: flex;
}
.browser {
  width: 253px;
  display: flex;
  flex-direction: column;
  padding: 0 2px 2px 1px;
  border-right: 2px solid #c8c8c8;
}
.browser h2,
.props h2 {
  height: 20px;
  padding: 0 2px;
  line-height: 22px;
  color: #333;
}
.tree {
  flex: 1;
  background: #fff;
  list-style: none;
  color: #000;
}
.tree li {
  display: flex;
  align-items: center;
  height: 18px;
}
.tree b {
  width: 7px;
}
.tree strong {
  margin: 0 -3px;
  padding: 0 3px;
  line-height: 18px;
  background: #e2e2e2;
}
.tree-ic {
  margin-right: 6px;
  stroke: #3c4450;
}
/* dotted guide cells of the trees */
.g {
  --dot-v: repeating-linear-gradient(to bottom, #a0a0a0 0 1px, transparent 1px 2px);
  --dot-h: repeating-linear-gradient(to right, #a0a0a0 0 1px, transparent 1px 2px);
  flex: none;
  align-self: stretch;
  width: 20px;
  padding: 6px 0 0 4px;
  background-repeat: no-repeat;
}
.g.v {
  background-image: var(--dot-v);
  background-size: 1px 100%;
  background-position: 8px 0;
}
.g.t {
  background-image: var(--dot-v), var(--dot-h);
  background-size: 1px 100%, 12px 1px;
  background-position: 8px 0, 8px 10px;
}
.g.l {
  background-image: var(--dot-v), var(--dot-h);
  background-size: 1px 10px, 12px 1px;
  background-position: 8px 0, 8px 10px;
}
.g.down {
  background-image: var(--dot-v), var(--dot-h);
  background-size: 1px 8px, 12px 1px;
  background-position: 8px 10px, 8px 10px;
}
.tog {
  display: block;
  width: 9px;
  height: 9px;
  border: 1px solid #919191;
  border-radius: 1px;
  background: linear-gradient(#3a5cae, #3a5cae) 1px 3px / 5px 1px no-repeat, linear-gradient(#fff, #ddd);
}
.tog.plus {
  background: linear-gradient(#3a5cae, #3a5cae) 1px 3px / 5px 1px no-repeat,
    linear-gradient(#3a5cae, #3a5cae) 3px 1px / 1px 5px no-repeat, linear-gradient(#fff, #ddd);
}

.views {
  flex: 1;
  display: flex;
  flex-direction: column;
  min-width: 0;
  padding-bottom: 2px;
  background: #fff;
}
.doctabs {
  display: flex;
  height: 20px;
  background: #cbcbcb;
}
.doctabs button {
  display: flex;
  align-items: center;
  gap: 8px;
  width: 128px;
  padding: 0 5px;
  color: #a4a4a4;
}
.doctabs svg {
  stroke: #8a9096;
}
.doctabs .current {
  background: #fff;
  color: #c4c4c4;
  font-weight: bold;
}
.doctabs .x {
  width: 12px;
  height: 12px;
  margin-left: auto;
  stroke: #222;
  stroke-width: 2;
}
.doctabs .more {
  width: 20px;
  margin-left: auto;
  padding: 0 2px;
}
.canvas {
  flex: 1;
  display: flex;
}
.sheet {
  flex: 1;
  margin: 38px 221px 36px 222px;
  border: 1px solid #555;
  box-shadow: inset 0 0 0 1px #aaa;
}
.vscroll {
  display: flex;
  flex-direction: column;
  justify-content: space-between;
  width: 16px;
  margin: 2px 2px 0 0;
  padding: 4px 3px;
  background: #f0f0f0;
}
.vscroll svg,
.arrow {
  width: 10px;
  height: 10px;
  stroke: #555;
  stroke-width: 2;
}
.viewbar {
  display: flex;
  align-items: center;
  gap: 5px;
  height: 17px;
  margin: 0 2px;
  background: #f0f0f0;
  color: #000;
}
.viewbar .ic {
  stroke: #3c4450;
}
.scale {
  width: 74px;
  padding-left: 27px;
}
.viewbar .arrow {
  margin-left: 1px;
}
.track {
  flex: 1;
  height: 16px;
}
.thumb {
  display: block;
  width: 17px;
  height: 16px;
  margin-left: 49%;
  background: #cdcdcd;
}
.viewbar .thumb {
  margin-left: calc(50% - 6px);
}
.grip {
  width: 9px;
  height: 9px;
  margin: 4px 3px 0 4px;
  background: radial-gradient(#b4b4b4 50%, transparent 55%) 0 0 / 3px 3px;
  clip-path: polygon(100% 0, 100% 100%, 0 100%);
}

/* properties palette */
.props {
  width: 220px;
  display: flex;
  flex-direction: column;
  border-left: 2px solid #c8c8c8;
  padding: 0 1px 2px 3px;
}
.typebox {
  display: flex;
  align-items: center;
  justify-content: space-between;
  height: 71px;
  padding-left: 1px;
  border: 1px solid #e2e2e2;
  background: linear-gradient(#f6f6f6, #e6e6e6);
}
.thumb-r {
  width: 65px;
  height: 65px;
  border: 1px solid #ddd;
  background: #ececec;
}
.typebox .caret {
  border-width: 4px;
  border-bottom: none;
  border-top-color: #888;
}
.family-row {
  display: flex;
  align-items: center;
  height: 26px;
}
.family-row select {
  appearance: none;
  width: 134px;
  height: 22px;
  padding: 0 4px;
  border: 1px solid #adadad;
  border-radius: 0;
  background: #e1e1e1;
  color: #000;
}
.family-row .chev {
  width: 10px;
  height: 10px;
  margin: 0 8px 0 -14px;
  stroke: #444;
}
.family-row button {
  display: flex;
  align-items: center;
  gap: 5px;
  color: #9a9a9a;
}
.family-row .ic {
  stroke: #a0a0a0;
  stroke-width: 2;
}
.param-list {
  flex: 1;
  background: #fff;
}
.params {
  width: 100%;
  border-collapse: collapse;
  table-layout: fixed;
  color: #000;
}
.params tr {
  height: 18px;
}
.params td {
  height: 18px;
  padding: 0 0 0 5px;
  border: 1px dotted #777;
  border-left: none;
  line-height: 14px;
  white-space: nowrap;
}
.params td:last-child {
  padding: 0 3px;
}
.params .cat th {
  padding: 0 5px 0 2px;
  background: #dcdcdc;
  font-weight: normal;
  text-align: left;
}
.params .cat div {
  display: flex;
  align-items: center;
  justify-content: space-between;
}
.params .cat svg {
  width: 8px;
  height: 10px;
  stroke: #000;
  stroke-width: 2;
}
.params .off {
  color: #777;
}
.params td.edit {
  padding: 0;
}
.edit input {
  display: block;
  width: 100%;
  height: 17px;
  padding: 0 2px;
  border: 1px solid #000;
  background: #fff;
}
.props-foot {
  display: flex;
  align-items: center;
  justify-content: space-between;
  height: 26px;
  padding-left: 1px;
}
.props-foot a {
  color: #0a6cc8;
}
.props-foot button {
  width: 74px;
  height: 21px;
  border: 1px solid #bfbfbf;
  background: #ccc;
  color: #838383;
}
.thin,
.list input {
  appearance: none;
  display: block;
  flex: none;
  width: 13px;
  height: 13px;
  border: 1px solid #333;
  background: #fff;
}
.thin:checked::before,
.list input:checked::before {
  content: "";
  display: block;
  height: 100%;
  background: #333;
  clip-path: polygon(5% 50%, 14% 40%, 38% 66%, 88% 14%, 96% 22%, 38% 84%);
}

/* status bar */
.status {
  display: flex;
  align-items: center;
  justify-content: space-between;
  height: 24px;
  padding: 0 65px 0 1px;
  background: #cbcbcb;
  color: #000;
}
.status-icons {
  display: flex;
  align-items: center;
  gap: 9px;
}
.status-icons svg {
  width: 16px;
  height: 16px;
  fill: #9c9c9c;
}
.status-icons span {
  margin-left: -8px;
}

/* taskbar */
.taskbar {
  display: flex;
  height: 30px;
  background: #060606;
}
.taskbar svg {
  width: 16px;
  height: 16px;
}
.taskbar button {
  display: flex;
  align-items: center;
  justify-content: center;
  width: 36px;
}
.apps {
  display: flex;
  gap: 1px;
  margin-left: 3px;
}
.open {
  background: linear-gradient(#76b9ed, #76b9ed) bottom / 28px 2px no-repeat;
}
.focused {
  background: linear-gradient(#76b9ed, #76b9ed) bottom / 100% 2px no-repeat #383838;
}
.tray {
  display: flex;
  align-items: center;
  gap: 9px;
  margin-left: auto;
  color: #fff;
}
.tray svg {
  stroke: #fff;
}
.tray svg:first-child {
  margin-right: 5px;
}
.tray .note {
  margin: 0 10px 0 11px;
}
.show-desktop {
  width: 5px;
  height: 100%;
  border-left: 1px solid #555;
}

/* visibility dialog, floats over the workspace */
.dialog {
  position: absolute;
  left: 436px;
  right: 192px;
  top: 238px;
  bottom: 117px;
  display: flex;
  flex-direction: column;
  border: 1px solid #1883d7;
  background: #f0f0f0;
  color: #000;
  box-shadow: 0 4px 16px rgba(0, 0, 0, 0.35);
  z-index: 2;
}
.dlg-title {
  display: flex;
  align-items: center;
  justify-content: space-between;
  height: 30px;
  padding: 0 9px 0 8px;
  background: #fff;
}
.dlg-title svg {
  width: 12px;
  height: 12px;
  stroke: #000;
}
.dlg-tabs,
.dlg-top,
.btns,
.override,
.dlg-foot {
  font-family: Roboto, "Liberation Sans", sans-serif;
}
.dlg-tabs {
  display: flex;
  align-items: flex-end;
  height: 27px;
  padding: 0 6px;
}
.dlg-tabs button {
  height: 19px;
  padding: 0 5px;
  border: 1px solid #d9d9d9;
  border-left: none;
}
.dlg-tabs .current {
  height: 21px;
  margin-bottom: -1px;
  padding: 0 7px;
  border-left: 1px solid #d9d9d9;
  border-bottom: none;
  background: #fff;
  z-index: 1;
}
.dlg-page {
  flex: 1;
  display: flex;
  flex-direction: column;
  margin: 0 8px 0 6px;
  padding: 8px 12px 19px 14px;
  border: 1px solid #dcdcdc;
  background: #fff;
}
.dlg-top {
  display: flex;
  align-items: center;
  gap: 2px;
}
.dlg-top p {
  margin-left: auto;
}
.list {
  flex: 1;
  margin-top: 39px;
  border: 1px solid #a0a0a0;
  border-right-color: #e3e3e3;
  border-bottom-color: #e3e3e3;
  box-shadow: inset 1px 1px 0 #696969;
  padding: 1px 0 0 1px;
}
.list table {
  width: 100%;
  border-collapse: collapse;
}
.list th {
  height: 19px;
  padding: 0 0 0 110px;
  background: #f0f0f0;
  border-bottom: 1px solid #666;
  font-weight: normal;
}
.list td {
  height: 18px;
  padding: 0;
  border-bottom: 1px solid #a0a0a0;
}
.list td div {
  display: flex;
  height: 17px;
}
.list td label {
  flex: 1;
  margin-left: 6px;
  padding-left: 2px;
  border: 1px solid transparent;
  border-width: 1px 0 0 1px;
  line-height: 16px;
}
.list td .focus {
  border-color: #000;
  border-style: dotted;
}
.list input {
  width: 11px;
  height: 11px;
  margin: 2px 0 0 2px;
  border-color: #777;
}
.list input:checked::before {
  background: #000;
  clip-path: polygon(8% 36%, 32% 56%, 90% 0, 95% 30%, 36% 94%, 8% 66%);
}
.btns {
  display: flex;
  gap: 8px;
  margin: 7px 0 0 1px;
}
.btns button,
.override button,
.dlg-foot button {
  width: 88px;
  height: 22px;
  border: 1px solid #adadad;
  background: #e1e1e1;
}
.override {
  display: flex;
  align-items: flex-start;
  justify-content: space-between;
  width: 383px;
  height: 68px;
  margin: 12px 0 0 3px;
  padding: 7px 17px 0 18px;
  border: 1px solid #dcdcdc;
}
.override p {
  width: 228px;
  line-height: 13px;
}
.override button {
  width: 108px;
  margin-top: 5px;
}
.dlg-foot {
  display: flex;
  align-items: flex-start;
  justify-content: flex-end;
  gap: 8px;
  height: 37px;
  padding-top: 8px;
}
.dlg-foot button {
  width: 73px;
  height: 21px;
}
.dlg-foot .default {
  border: 2px solid #0078d7;
}
.dlg-foot .grip {
  align-self: flex-end;
  margin: 0 0 1px -10px;
}
```
